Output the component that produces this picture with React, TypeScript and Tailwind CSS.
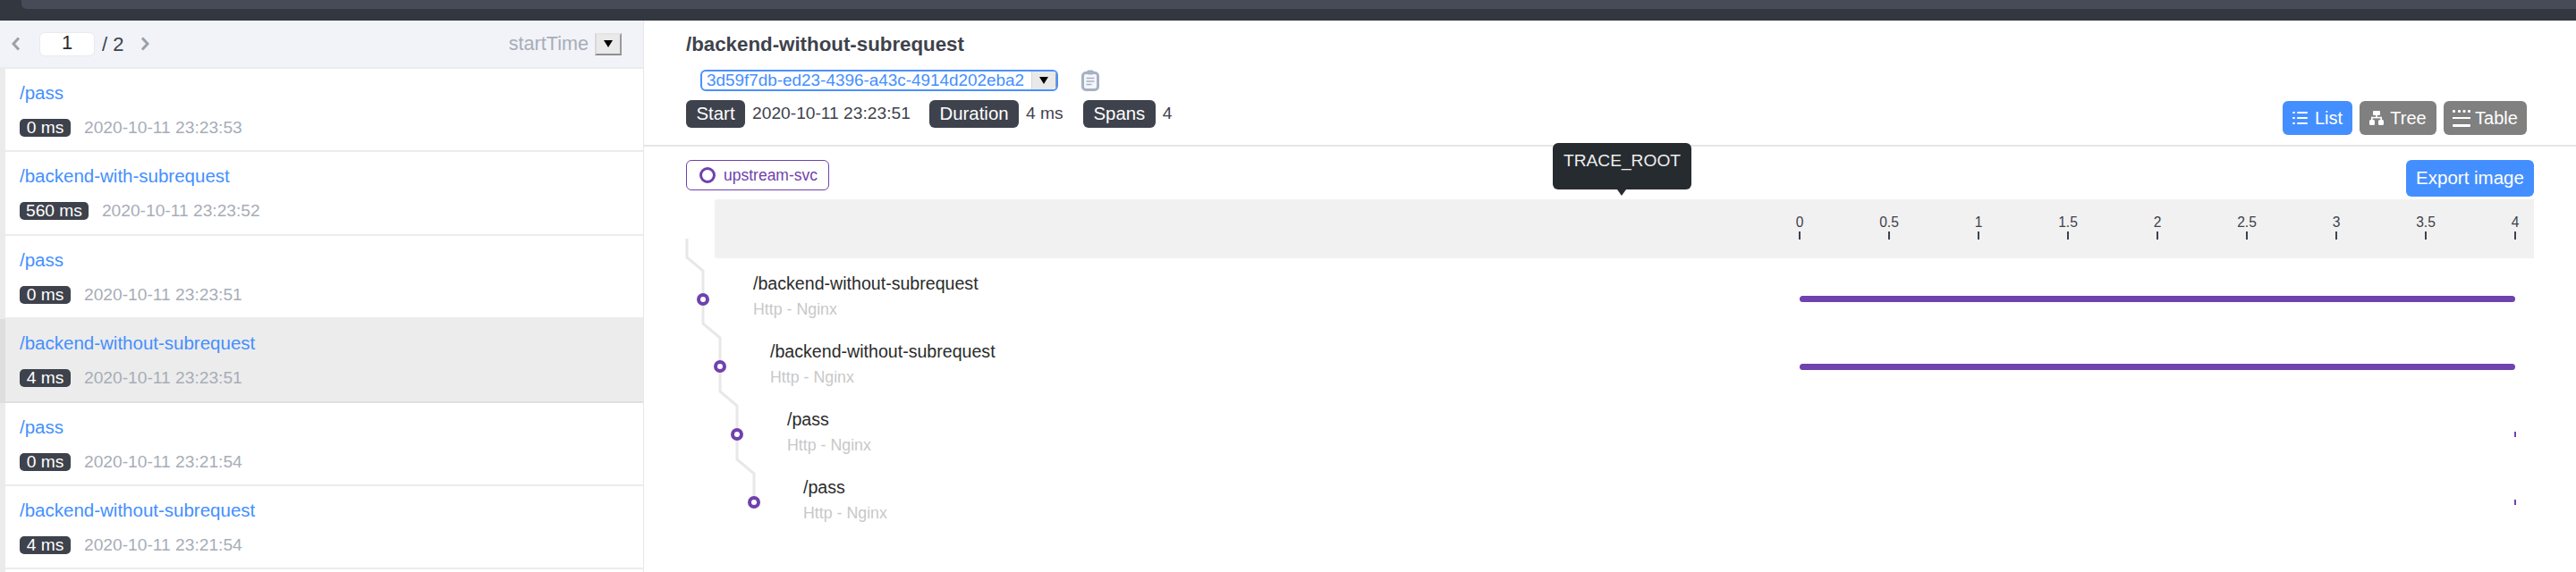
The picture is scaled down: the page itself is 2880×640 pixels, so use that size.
import React from "react";

const items = [
  { name: "/pass", ms: "0 ms", time: "2020-10-11 23:23:53" },
  { name: "/backend-with-subrequest", ms: "560 ms", time: "2020-10-11 23:23:52" },
  { name: "/pass", ms: "0 ms", time: "2020-10-11 23:23:51" },
  { name: "/backend-without-subrequest", ms: "4 ms", time: "2020-10-11 23:23:51", active: true },
  { name: "/pass", ms: "0 ms", time: "2020-10-11 23:21:54" },
  { name: "/backend-without-subrequest", ms: "4 ms", time: "2020-10-11 23:21:54" },
];

const ticks = ["0", "0.5", "1", "1.5", "2", "2.5", "3", "3.5", "4"];

function NativeArrow({ className }: { className: string }) {
  return (
    <div className={`flex items-center justify-center bg-[#e9e9e9] border-2 border-t-[#e4e4e4] border-l-[#d8d8d8] border-r-[#9a9a9a] border-b-[#8f8f8f] ${className}`}>
      <div className="w-0 h-0 border-l-[5px] border-r-[5px] border-t-[8px] border-l-transparent border-r-transparent border-t-black" />
    </div>
  );
}

function Clipboard() {
  return (
    <svg width="20" height="24" viewBox="0 0 20 24" className="ml-[26px]">
      <rect x="1.5" y="3.5" width="17" height="19" rx="3.5" fill="#f4f6fa" stroke="#a7b1c4" strokeWidth="3" />
      <rect x="6" y="0.5" width="8" height="5" rx="2" fill="#a7b1c4" />
      <path d="M5.5 9.5h9M5.5 13h9M5.5 16.5h6" stroke="#a7b1c4" strokeWidth="1.5" fill="none" />
    </svg>
  );
}

function Tag({ label, value, className }: { label: string; value: string; className: string }) {
  return (
    <div className={`flex items-center ${className}`}>
      <span className="h-[31px] flex items-center px-[11.5px] rounded-[6px] bg-[#3e424c] text-white text-[20.4px]">{label}</span>
      <span className="ml-[8px] text-[19.2px] text-[#3e424c]">{value}</span>
    </div>
  );
}

function ListIcon() {
  return (
    <svg width="17" height="16" viewBox="0 0 17 16" fill="white">
      <rect x="0" y="1" width="3" height="2" rx="1" />
      <rect x="5" y="1" width="12" height="2" rx="1" />
      <rect x="0" y="7" width="3" height="2" rx="1" />
      <rect x="5" y="7" width="12" height="2" rx="1" />
      <rect x="0" y="13" width="3" height="2" rx="1" />
      <rect x="5" y="13" width="12" height="2" rx="1" />
    </svg>
  );
}

function TreeIcon() {
  return (
    <svg width="16" height="16" viewBox="0 0 16 16" fill="white">
      <rect x="4" y="0" width="8" height="5" rx="1" />
      <rect x="2" y="6.8" width="12" height="1.6" />
      <rect x="2" y="6.8" width="1.6" height="4" />
      <rect x="12.4" y="6.8" width="1.6" height="4" />
      <rect x="7.2" y="4" width="1.6" height="4" />
      <rect x="0" y="10" width="6" height="6" rx="1.5" />
      <rect x="10" y="10" width="6" height="6" rx="1.5" />
    </svg>
  );
}

function TableIcon() {
  return (
    <svg width="20" height="19" viewBox="0 0 20 19" fill="white">
      <rect x="0" y="0" width="3" height="3" rx="1" />
      <rect x="6" y="0" width="3" height="3" rx="1" />
      <rect x="11.5" y="0" width="3" height="3" rx="1" />
      <rect x="17" y="0" width="3" height="3" rx="1" />
      <rect x="0" y="8" width="20" height="2" />
      <rect x="0" y="16" width="20" height="3" rx="1" />
    </svg>
  );
}

const rows = [
  { name: "/backend-without-subrequest", pad: "pl-[75px]", bar: "long" },
  { name: "/backend-without-subrequest", pad: "pl-[94px]", bar: "long" },
  { name: "/pass", pad: "pl-[113px]", bar: "dot" },
  { name: "/pass", pad: "pl-[131px]", bar: "dot" },
];

export default function App() {
  return (
    <div className="relative w-[2880px] h-[640px] overflow-hidden bg-white font-['Liberation_Sans',Arial,sans-serif]">
      <div className="h-[23px] bg-[#33373f]">
        <div className="ml-[24px] h-[10px] bg-[#474b58] rounded-bl-[6px]" />
      </div>
      <div className="flex h-[617px]">
        <aside className="w-[720px] shrink-0 border-r border-[#e8e8e8]">
          <div className="h-[54px] bg-[#f1f3f8] border-b-2 border-[#e9ebf0] flex items-center">
            <svg width="12" height="18" viewBox="0 0 12 18" className="ml-[12px]" fill="none">
              <path d="M9 2.5L3 9l6 6.5" stroke="#9aa0aa" strokeWidth="3" />
            </svg>
            <div className="ml-[20px] w-[62px] h-[27px] bg-white rounded-[6px] border border-[#e8eaf0] text-center text-[22px] leading-[22px] text-[#2b2b2b]">1</div>
            <span className="ml-[8px] text-[22px] text-[#3e424c]">/ 2</span>
            <svg width="12" height="18" viewBox="0 0 12 18" className="ml-[18px]" fill="none">
              <path d="M3 2.5L9 9l-6 6.5" stroke="#9aa0aa" strokeWidth="3" />
            </svg>
            <span className="ml-auto text-[21.6px] text-[#a7adb8]">startTime</span>
            <NativeArrow className="ml-[7px] mr-[24px] w-[30px] h-[25px]" />
          </div>
          <div className="pl-[6px] bg-[#ebebeb]">
            {items.map((it, i) => (
              <div key={i} className={`h-[93.4px] border-b-2 pl-[16px] flex flex-col ${it.active ? "bg-[#ececec] border-[#e0e0e0] shadow-[-6px_0_0_#dedede]" : "bg-white border-[#ececec]"}`}>
                <div className="mt-[13px] h-[28px] leading-[28px] text-[20.5px] text-[#448fff]">{it.name}</div>
                <div className="mt-[15px] flex items-center">
                  <span className="h-[20px] px-[7px] rounded-[5px] bg-[#3e424c] text-white text-[19.2px] leading-[20px] min-w-[57px] text-center">{it.ms}</span>
                  <span className="ml-[15px] text-[19.2px] leading-[20px] text-[#a7adb8]">{it.time}</span>
                </div>
              </div>
            ))}
            <div className="h-[10px] bg-white" />
          </div>
        </aside>
        <main className="flex-1 min-w-0">
          <div className="relative h-[141px] border-b-2 border-[#e6e6e6] pl-[47px]">
            <h1 className="pt-[12px] h-[30px] box-content text-[22.3px] leading-[30px] font-bold text-[#3e424c]">/backend-without-subrequest</h1>
            <div className="mt-[13px] ml-[16px] flex items-center h-[24px]">
              <div className="w-[400px] h-[24px] border-2 border-[#4a90ff] rounded-[6px] flex items-center overflow-hidden pl-[5px]">
                <span className="text-[18.9px] leading-[20px] text-[#448fff] whitespace-nowrap">3d59f7db-ed23-4396-a43c-4914d202eba2</span>
                <NativeArrow className="ml-auto w-[28px] h-[22px] border-[1px]" />
              </div>
              <Clipboard />
            </div>
            <div className="mt-[10px] flex items-center">
              <Tag label="Start" value="2020-10-11 23:23:51" className="w-[272px]" />
              <Tag label="Duration" value="4 ms" className="w-[172px]" />
              <Tag label="Spans" value="4" className="" />
            </div>
            <div className="absolute right-[55px] top-[90px] flex gap-[8px]">
              <button className="h-[38px] w-[78px] rounded-[6px] bg-[#448fff] text-white text-[20px] flex items-center justify-center gap-[8px]"><ListIcon />List</button>
              <button className="h-[38px] w-[86px] rounded-[6px] bg-[#808080] text-white text-[20px] flex items-center justify-center gap-[7px]"><TreeIcon />Tree</button>
              <button className="h-[38px] w-[93px] rounded-[6px] bg-[#808080] text-white text-[20px] flex items-center justify-center gap-[5px]"><TableIcon />Table</button>
            </div>
          </div>
          <div className="relative pl-[47px] pr-[47px]">
            <div className="flex justify-between items-start pt-[15px] h-[59px]">
              <div className="w-[160px] h-[34px] border-[1.5px] border-[#6f42ad] rounded-[6px] flex items-center pl-[14px] text-[#6f42ad] text-[17.5px]">
                <span className="w-[18px] h-[18px] rounded-full border-[3.5px] border-[#6f42ad]" />
                <span className="ml-[9px]">upstream-svc</span>
              </div>
              <button className="h-[41px] w-[143px] rounded-[6px] bg-[#448fff] text-white text-[20.5px]">Export image</button>
            </div>
            <div className="ml-[32px] h-[66px] bg-[#f1f1f1] rounded-l-[3px] relative">
              {ticks.map((t, i) => (
                <div key={t} className={`absolute top-[18px] w-[40px] -ml-[20px] flex flex-col items-center ${["left-[1213px]", "left-[1313px]", "left-[1413px]", "left-[1513px]", "left-[1613px]", "left-[1713px]", "left-[1813px]", "left-[1913px]", "left-[2013px]"][i]}`}>
                  <span className="text-[15.6px] leading-[15px] text-[#3e424c]">{t}</span>
                  <span className="mt-[3px] w-[1.5px] h-[9px] bg-[#3e424c]" />
                </div>
              ))}
            </div>
            <div className="pt-[10px]">
              {rows.map((r, i) => (
                <div key={i} className={`h-[76px] flex ${r.pad}`}>
                  <div className="pt-[6px]">
                    <div className="text-[19.6px] leading-[24px] text-[#2b2b2b]">{r.name}</div>
                    <div className="mt-[7px] text-[17.8px] leading-[20px] text-[#c8c8c8]">Http - Nginx</div>
                  </div>
                  {r.bar === "long" ? (
                    <div className={`absolute left-[1292px] w-[800px] h-[7px] rounded-full bg-[#6f42ad] ${i === 0 ? "top-[167px]" : "top-[243px]"}`} />
                  ) : (
                    <div className={`absolute left-[2091px] w-[2px] h-[6px] bg-[#6f42ad] ${i === 2 ? "top-[319px]" : "top-[395px]"}`} />
                  )}
                </div>
              ))}
            </div>
          </div>
        </main>
      </div>

      {/* trace tree connectors */}
      <svg className="absolute left-[760px] top-[260px]" width="100" height="320" viewBox="760 260 100 320" fill="none">
        <path d="M768 267V288L786 303V362L805 378V438L824 454V514L843 530V562" stroke="#e8e8e8" strokeWidth="3" />
        {[[786, 335], [805, 410], [824, 486], [843, 562]].map(([x, y]) => (
          <circle key={x} cx={x} cy={y} r="5" fill="white" stroke="#6f42ad" strokeWidth="4" />
        ))}
      </svg>

      {/* tooltip */}
      <div className="absolute left-[1736px] top-[160px] w-[155px] h-[52px] rounded-[6px] bg-[#262b30] text-[#eeeeee] text-[19.2px] leading-[40px] text-center">
        TRACE_ROOT
        <div className="absolute left-[72px] top-[52px] w-0 h-0 border-l-[5px] border-r-[5px] border-t-[7px] border-l-transparent border-r-transparent border-t-[#262b30]" />
      </div>
    </div>
  );
}
